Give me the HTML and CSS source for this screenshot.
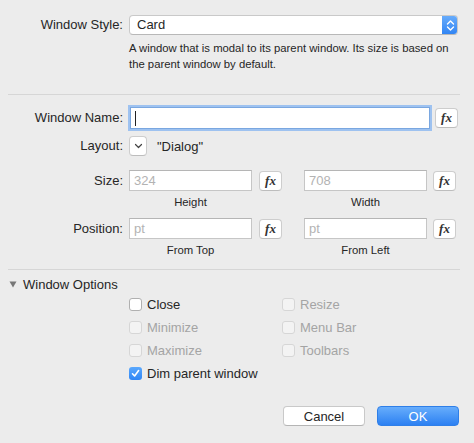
FILE: index.html
```html
<!DOCTYPE html>
<html>
<head>
<meta charset="utf-8">
<link rel="stylesheet" href="styles.css">
</head>
<body>
<div class="panel">
  <div class="form top">
    <div class="label">Window Style:</div>
    <div class="popup">
      <span class="popup-text">Card</span>
      <span class="stepper">
        <svg width="9" height="13" viewBox="0 0 9 13"><path d="M1.5 5 L4.5 2 L7.5 5 M1.5 8 L4.5 11 L7.5 8" fill="none" stroke="#fff" stroke-width="1.4" stroke-linecap="round" stroke-linejoin="round"/></svg>
      </span>
    </div>
    <div></div>
    <div class="desc">A window that is modal to its parent window. Its size is based on the parent window by default.</div>
  </div>

  <div class="sep sep1"></div>

  <div class="form mid">
    <div class="label">Window Name:</div>
    <div class="line">
      <div class="input focus"><span class="caret"></span></div>
      <div class="fx">fx</div>
    </div>

    <div class="label">Layout:</div>
    <div class="line layout-line">
      <div class="drop">
        <svg width="9" height="6" viewBox="0 0 9 6"><path d="M1.5 1.5 L4.5 4.5 L7.5 1.5" fill="none" stroke="#444" stroke-width="1.2" stroke-linecap="round" stroke-linejoin="round"/></svg>
      </div>
      <span class="dialog">"Dialog"</span>
    </div>

    <div class="label lbl-size">Size:</div>
    <div class="pair-row">
      <div class="pair">
        <div class="line"><div class="input small"><span class="ph">324</span></div><div class="fx">fx</div></div>
        <div class="sub">Height</div>
      </div>
      <div class="pair">
        <div class="line"><div class="input small"><span class="ph">708</span></div><div class="fx">fx</div></div>
        <div class="sub">Width</div>
      </div>
    </div>

    <div class="label lbl-pos">Position:</div>
    <div class="pair-row">
      <div class="pair">
        <div class="line"><div class="input small"><span class="ph">pt</span></div><div class="fx">fx</div></div>
        <div class="sub">From Top</div>
      </div>
      <div class="pair">
        <div class="line"><div class="input small"><span class="ph">pt</span></div><div class="fx">fx</div></div>
        <div class="sub">From Left</div>
      </div>
    </div>
  </div>

  <div class="sep sep2"></div>

  <div class="options-head">
    <svg class="tri" width="8" height="7" viewBox="0 0 8 7"><path d="M0.5 0.5 H7.5 L4 6.5 Z" fill="#777"/></svg>
    <span>Window Options</span>
  </div>

  <div class="checks">
    <label class="check"><span class="box"></span>Close</label>
    <label class="check disabled"><span class="box"></span>Resize</label>
    <label class="check disabled"><span class="box"></span>Minimize</label>
    <label class="check disabled"><span class="box"></span>Menu Bar</label>
    <label class="check disabled"><span class="box"></span>Maximize</label>
    <label class="check disabled"><span class="box"></span>Toolbars</label>
    <label class="check"><span class="box checked"><svg width="11" height="11" viewBox="0 0 11 11"><path d="M2.5 5.8 L4.6 8 L8.6 2.6" fill="none" stroke="#fff" stroke-width="1.6" stroke-linecap="round" stroke-linejoin="round"/></svg></span>Dim parent window</label>
  </div>

  <div class="buttons">
    <div class="btn cancel">Cancel</div>
    <div class="btn ok">OK</div>
  </div>
</div>
</body>
</html>
```

FILE: styles.css
```css
html, body {
  margin: 0;
  padding: 0;
  background: #ececec;
}
body {
  font-family: "Liberation Sans", Arial, sans-serif;
  font-size: 13px;
  color: #262626;
  width: 474px;
  height: 443px;
  overflow: hidden;
}
.panel {
  padding-top: 15px;
}
.form {
  display: grid;
  grid-template-columns: 123px 1fr;
  column-gap: 6px;
  padding-right: 16px;
  align-items: start;
}
.label {
  text-align: right;
  height: 20px;
  line-height: 20px;
  white-space: nowrap;
}
.popup {
  height: 20px;
  box-sizing: border-box;
  background: #fff;
  border: 1px solid #c9c9c9;
  border-bottom-color: #b8b8b8;
  border-radius: 4px;
  display: flex;
  align-items: center;
  justify-content: space-between;
  overflow: hidden;
}
.popup-text {
  padding-left: 7px;
  line-height: 18px;
}
.stepper {
  width: 16px;
  height: 20px;
  margin: -1px -1px -1px 0;
  background: linear-gradient(#6aaefc, #2f83f3);
  border-radius: 0 4px 4px 0;
  display: flex;
  align-items: center;
  justify-content: center;
}
.desc {
  font-size: 11.3px;
  line-height: 16px;
  color: #262626;
  margin-top: 5px;
  padding-right: 6px;
}
.sep {
  height: 1px;
  background: #d6d6d6;
  margin-left: 8px;
  margin-right: 14px;
}
.sep1 { margin-top: 22px; }
.mid { margin-top: 12px; row-gap: 6px; }
.mid .label { height: 22px; line-height: 22px; }
.line {
  display: flex;
  align-items: center;
  gap: 5px;
  height: 22px;
}
.input {
  flex: 1;
  height: 22px;
  box-sizing: border-box;
  background: #fff;
  border: 1px solid #c6c6c6;
  border-top-color: #b5b5b5;
  display: flex;
  align-items: center;
  padding-left: 4px;
}
.input.focus {
  border-color: #7aa7e0;
  box-shadow: 0 0 0 2px #9ec2f0;
  margin-left: 1px;
}
.caret {
  width: 1px;
  height: 15px;
  background: #222;
}
.input.small {
  width: 123px;
  flex: none;
  height: 21px;
}
.ph {
  color: #b3b3b3;
}
.fx {
  width: 23px;
  height: 20px;
  box-sizing: border-box;
  background: #fff;
  border: 1px solid #cdcdcd;
  border-bottom-color: #bdbdbd;
  border-radius: 4px;
  font-family: "Liberation Serif", "Times New Roman", serif;
  font-style: italic;
  font-weight: bold;
  font-size: 13px;
  color: #333;
  display: flex;
  align-items: center;
  justify-content: center;
  line-height: 1;
  padding-bottom: 1px;
}
.layout-line {
  gap: 10px;
}
.drop {
  width: 18px;
  height: 20px;
  box-sizing: border-box;
  background: #fff;
  border: 1px solid #cdcdcd;
  border-bottom-color: #bdbdbd;
  border-radius: 4px;
  display: flex;
  align-items: center;
  justify-content: center;
}
.dialog { font-size: 13px; }
.mid .lbl-size, .mid .lbl-pos { height: 21px; line-height: 21px; }
.lbl-size { margin-top: 7px; }
.pair-row {
  display: flex;
  gap: 22px;
}
.lbl-size + .pair-row { margin-top: 7px; }
.lbl-pos { margin-top: 3px; }
.lbl-pos + .pair-row { margin-top: 3px; }
.pair .line { gap: 7px; }
.pair + .pair .line { gap: 6px; }
.pair .line { height: 21px; }
.sub {
  width: 123px;
  text-align: center;
  font-size: 11.3px;
  margin-top: 4px;
  line-height: 14px;
  color: #262626;
}
.sep2 { margin-top: 12px; }
.options-head {
  display: flex;
  align-items: center;
  height: 20px;
  margin-top: 4px;
  padding-left: 9px;
  gap: 6px;
}
.checks {
  display: grid;
  grid-template-columns: 153px 153px;
  padding-left: 129px;
  row-gap: 6px;
  margin-top: 2px;
}
.check {
  display: flex;
  align-items: center;
  height: 17px;
  gap: 5px;
  white-space: nowrap;
}
.check.disabled { color: #a4a4a4; }
.box {
  width: 13px;
  height: 13px;
  box-sizing: border-box;
  border: 1px solid #b0b0b0;
  border-radius: 3px;
  background: #fff;
  display: flex;
  align-items: center;
  justify-content: center;
}
.disabled .box {
  border-color: #d6d6d6;
  background: #f3f3f3;
}
.box.checked {
  border: none;
  background: linear-gradient(#5aa8fd, #2f86f5);
}
.buttons {
  display: flex;
  justify-content: flex-end;
  gap: 12px;
  padding-right: 15px;
  margin-top: 24px;
}
.btn {
  width: 82px;
  height: 20px;
  box-sizing: border-box;
  border-radius: 4px;
  display: flex;
  align-items: center;
  justify-content: center;
  font-size: 13px;
}
.cancel {
  background: #fff;
  border: 1px solid #c9c9c9;
  border-bottom-color: #b5b5b5;
  color: #262626;
}
.ok {
  background: linear-gradient(#67adfc, #2c80f2);
  color: #fff;
  border: 1px solid #2f7fe8;
}
```
